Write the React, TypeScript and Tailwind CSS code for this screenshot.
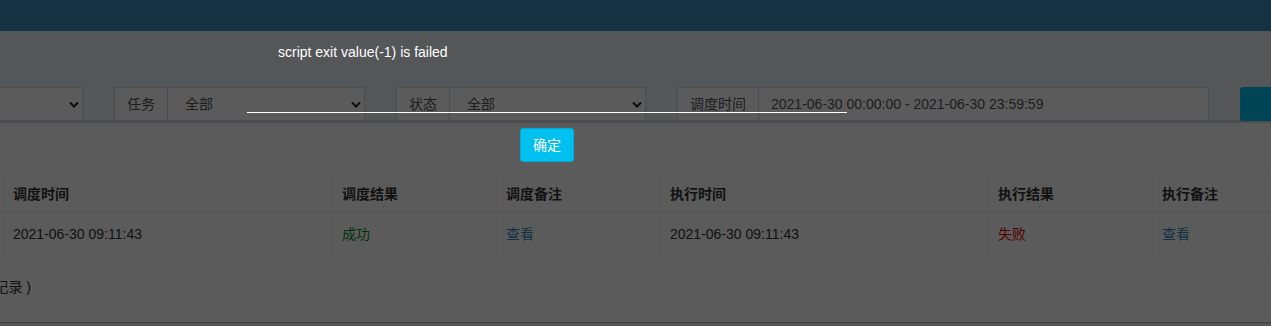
import React from "react"

const cjk = "font-['Liberation_Sans','Noto_Sans_CJK_SC',sans-serif]"

function Chevron() {
  return (
    <svg width="10" height="7" viewBox="0 0 10 7" className="shrink-0">
      <polyline points="1,1.5 5,5.5 9,1.5" fill="none" stroke="#222" strokeWidth="2" />
    </svg>
  )
}

function SelectBox({ value }: { value: string }) {
  return (
    <div className="flex h-[34px] flex-1 items-center justify-between border-y border-r border-[#d2d6de] bg-white pl-[17px] pr-[3px] text-[14px] text-[#555]">
      <span>{value}</span>
      <Chevron />
    </div>
  )
}

function Addon({ label }: { label: string }) {
  return (
    <div className="flex h-[34px] shrink-0 items-center border border-[#d2d6de] bg-white px-3 text-[14px] text-[#555]">
      {label}
    </div>
  )
}

const cols = [
  { title: "", value: "", w: "w-[4px] px-0" },
  { title: "调度时间", value: "2021-06-30 09:11:43", w: "w-[329px] px-[9px]" },
  { title: "调度结果", value: "成功", w: "w-[164px] px-[9px]", color: "text-[#0a8a2a]" },
  { title: "调度备注", value: "查看", w: "w-[164px] px-[9px]", color: "text-[#3c8dbc]" },
  { title: "执行时间", value: "2021-06-30 09:11:43", w: "w-[328px] px-[9px]" },
  { title: "执行结果", value: "失败", w: "w-[164px] px-[9px]", color: "text-[#e00000]" },
  { title: "执行备注", value: "查看", w: "w-[164px] px-[9px]", color: "text-[#3c8dbc]" },
]

export default function App() {
  return (
    <div className={`relative h-[326px] w-[1271px] overflow-hidden bg-[#ecf0f5] ${cjk}`}>
      {/* navbar */}
      <div className="h-[31px] bg-[#3c8dbc]" />

      {/* filters */}
      <div className="mt-[56px] flex gap-[31px]">
        <div className="flex w-[83px] shrink-0">
          <SelectBox value="" />
        </div>
        <div className="flex w-[251px] shrink-0">
          <Addon label="任务" />
          <SelectBox value="全部" />
        </div>
        <div className="flex w-[250px] shrink-0">
          <Addon label="状态" />
          <SelectBox value="全部" />
        </div>
        <div className="flex w-[532px] shrink-0">
          <Addon label="调度时间" />
          <div className="flex h-[34px] flex-1 items-center border-y border-r border-[#d2d6de] bg-white px-3 text-[14px] text-[#555]">
            2021-06-30 00:00:00 - 2021-06-30 23:59:59
          </div>
        </div>
        <div className="h-[34px] w-[60px] shrink-0 rounded-[3px] bg-[#00c0ef]" />
      </div>

      {/* box */}
      <div className="-mt-px h-[202px] border-t-[3px] border-[#d2d6de] bg-white shadow-[0_1px_1px_rgba(0,0,0,0.25)]">
        <div className="h-[52px]" />
        <div className="flex border-y border-[#f4f4f4]">
          {cols.map((c, i) => (
            <div
              key={i}
              className={`${c.w} h-[36px] shrink-0 border-r border-b border-[#f4f4f4] pt-[8px] text-[14px] font-bold leading-[20px] text-[#333] whitespace-nowrap`}
            >
              {c.title}
            </div>
          ))}
        </div>
        <div className="flex border-b border-[#f4f4f4]">
          {cols.map((c, i) => (
            <div
              key={i}
              className={`${c.w} h-[49px] shrink-0 border-r border-[#f4f4f4] pt-[11px] text-[14px] leading-[20px] whitespace-nowrap ${c.color ?? "text-[#333]"}`}
            >
              {c.value}
            </div>
          ))}
        </div>
        <div className="mt-[14px] flex w-[31px] justify-end whitespace-nowrap text-[14px] leading-[20px] text-[#333]">
          （共 1 条记录 )
        </div>
      </div>

      {/* layer shade */}
      <div className="absolute inset-0 bg-[rgba(0,0,0,0.643)]" />

      {/* layer dialog */}
      <div className="absolute left-[247px] top-[42px] w-[600px]">
        <div className="h-[71px] border-b border-white pl-[31px] text-[14px] leading-[20px] text-white">
          script exit value(-1) is failed
        </div>
        <div className="flex justify-center pt-[15px]">
          <button className="h-[34px] w-[54px] rounded-[3px] border border-[#00acd6] bg-[#00c0ef] text-[14px] text-white">
            确定
          </button>
        </div>
      </div>
    </div>
  )
}
